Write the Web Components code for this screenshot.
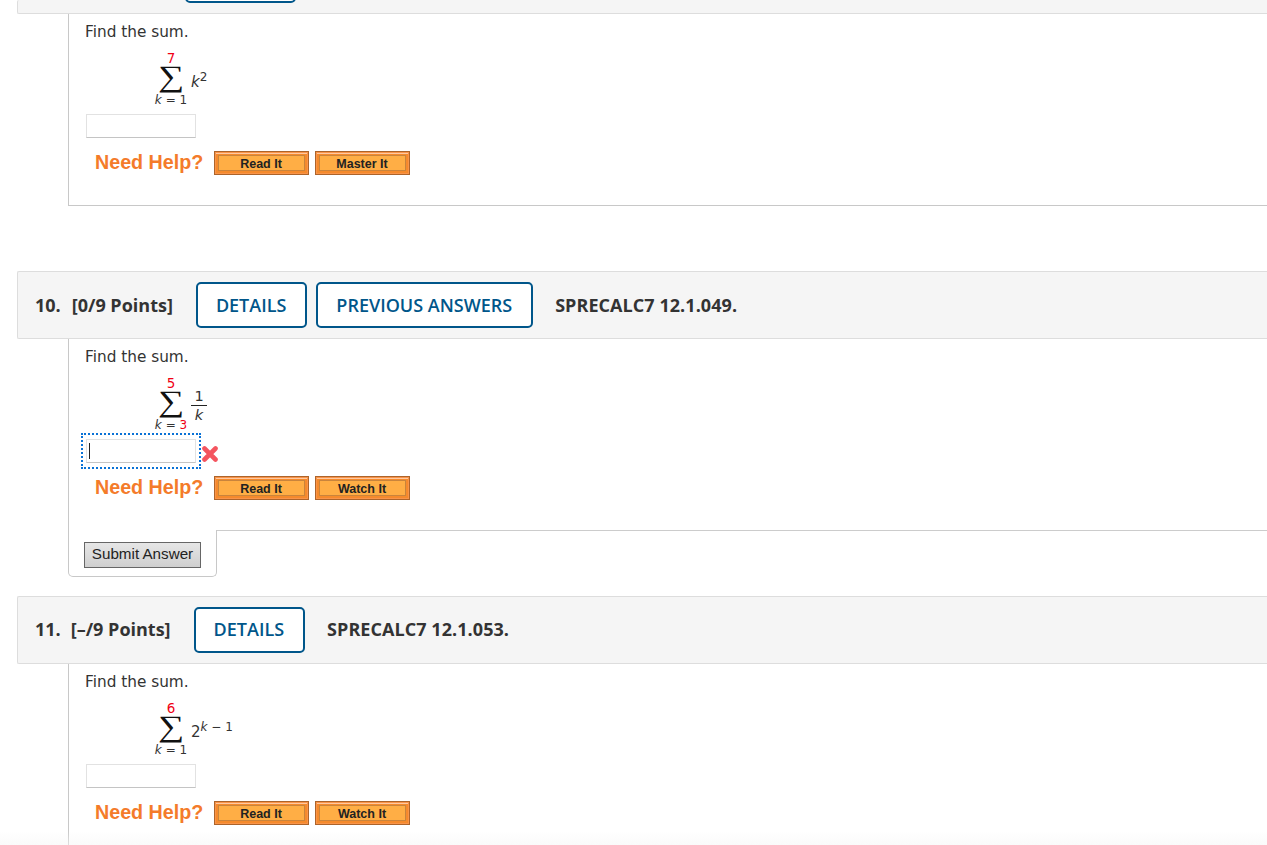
<!DOCTYPE html>
<html>
<head>
<meta charset="utf-8">
<title>Assignment</title>
<style>
  html, body { margin: 0; padding: 0; background: #fff; }
  body { height: 845px; overflow: hidden; position: relative; font-family: "DejaVu Sans", sans-serif; color: #333; }
  .fade { position: absolute; left: 0; right: 0; bottom: 0; height: 14px; background: linear-gradient(rgba(245,245,245,0), rgba(245,245,245,.5)); }
</style>
</head>
<body>

<q-header class="cut"></q-header>
<q-body>
  <sum-formula upper="7" lower="1"><i>k</i><sup>2</sup></sum-formula>
  <answer-box></answer-box>
  <need-help second="Master It"></need-help>
</q-body>

<q-header num="10." points="[0/9 Points]" code="SPRECALC7 12.1.049." style="margin-top:65px;--num-gap:11px">
  <details-button>DETAILS</details-button>
  <details-button>PREVIOUS ANSWERS</details-button>
</q-header>
<q-body submit>
  <sum-formula upper="5" lower="3" lower-red><frac-term>1</frac-term></sum-formula>
  <answer-box focused wrong></answer-box>
  <need-help second="Watch It"></need-help>
</q-body>

<q-header num="11." points="[–/9 Points]" code="SPRECALC7 12.1.053." style="margin-top:19px;--num-gap:10px;--row-pad:2px">
  <details-button>DETAILS</details-button>
</q-header>
<q-body>
  <sum-formula upper="6" lower="1">2<sup><i>k</i> − 1</sup></sum-formula>
  <answer-box></answer-box>
  <need-help second="Watch It"></need-help>
</q-body>

<div class="fade"></div>

<script>
class DetailsButton extends HTMLElement {
  constructor() {
    super();
    this.attachShadow({ mode: 'open' });
    this.shadowRoot.innerHTML = `
      <style>
        :host {
          display: inline-flex;
          align-items: center;
          box-sizing: border-box;
          height: 46px;
          padding: 0 19px var(--row-pad, 0) 18px;
          border: 2px solid #00568a;
          border-radius: 5px;
          background: #fff;
          color: #00568a;
          font: 600 18px "Open Sans", sans-serif;
          white-space: nowrap;
        }
      </style>
      <slot></slot>
    `;
  }
}
customElements.define('details-button', DetailsButton);

class QHeader extends HTMLElement {
  constructor() {
    super();
    this.attachShadow({ mode: 'open' });
  }

  connectedCallback() {
    const num = this.getAttribute('num') || '';
    const points = this.getAttribute('points') || '';
    const code = this.getAttribute('code') || '';
    this.shadowRoot.innerHTML = `
      <style>
        :host {
          display: block;
          box-sizing: border-box;
          height: 68px;
          margin-left: 17px;
          border: 1px solid #ddd;
          border-right: none;
          border-radius: 2px 0 0 2px;
          background: #f5f5f5;
          color: #333;
          font: 700 18px "Open Sans", sans-serif;
          overflow: hidden;
        }
        :host(.cut) { height: 14px; border-top: none; }
        .row { display: flex; align-items: center; height: 100%; padding-left: 17px; white-space: nowrap; }
        .num { margin-right: var(--num-gap, 11px); }
        .points { margin-right: 23px; }
        .btns { display: flex; gap: 9px; margin-right: 22px; }
        .label { padding-bottom: var(--row-pad, 0); }
        .code { letter-spacing: .06px; }
        .stub { box-sizing: border-box; width: 111px; height: 46px; margin: -43px 0 0 167px; border: 2px solid #00568a; border-radius: 5px; background: #fff; }
      </style>
      ${this.classList.contains('cut') ? '<div class="stub"></div>' : `
      <div class="row">
        <span class="num label">${num}</span>
        <span class="points label">${points}</span>
        <span class="btns"><slot></slot></span>
        <span class="code label">${code}</span>
      </div>`}
    `;
  }
}
customElements.define('q-header', QHeader);

class QBody extends HTMLElement {
  constructor() {
    super();
    this.attachShadow({ mode: 'open' });
  }

  connectedCallback() {
    const submit = this.hasAttribute('submit');
    this.shadowRoot.innerHTML = `
      <style>
        :host {
          display: block;
          margin-left: 68px;
          color: #333;
          font: 15.3px "DejaVu Sans", sans-serif;
        }
        .main {
          box-sizing: border-box;
          border-left: 1px solid #c8c8c8;
          padding: 9px 0 30px 16px;
        }
        :host(:not([submit])) .main { border-bottom: 1px solid #c8c8c8; }
        .find { height: 25px; line-height: 18px; }
        .foot { display: flex; height: 47px; }
        .tab {
          box-sizing: border-box;
          width: 149px;
          height: 47px;
          padding: 12px 0 0 15px;
          border: 1px solid #c8c8c8;
          border-top: none;
          border-radius: 0 0 5px 5px;
        }
        .rest { flex: 1; border-top: 1px solid #ccc; }
        .submit {
          box-sizing: border-box;
          width: 117px;
          height: 26px;
          padding: 0 0 3px;
          border: 1px solid #666;
          border-radius: 0;
          background: linear-gradient(#e6e6e6, #cfcfcf);
          color: #222;
          font: 15.2px "Liberation Sans", sans-serif;
        }
      </style>
      <div class="main" style="${submit ? 'padding-bottom:0;height:191px' : ''}">
        <div class="find">Find the sum.</div>
        <slot></slot>
      </div>
      ${submit ? `
      <div class="foot">
        <div class="tab"><button class="submit">Submit Answer</button></div>
        <div class="rest"></div>
      </div>` : ''}
    `;
  }
}
customElements.define('q-body', QBody);

class SumFormula extends HTMLElement {
  constructor() {
    super();
    this.attachShadow({ mode: 'open' });
  }

  connectedCallback() {
    const upper = this.getAttribute('upper');
    const lower = this.getAttribute('lower');
    const lowerColor = this.hasAttribute('lower-red') ? 'color:#f00014' : '';
    this.shadowRoot.innerHTML = `
      <style>
        :host {
          display: block;
          box-sizing: border-box;
          height: 66px;
          padding: 3px 0 0 69px;
          color: #333;
          font: 12px "DejaVu Sans", sans-serif;
        }
        .wrap { display: flex; align-items: center; }
        .sum { display: grid; justify-items: center; width: 34px; }
        .upper { color: #f00014; height: 13px; font-size: 13.5px; line-height: 14px; }
        .sigma { height: 27px; font: 400 34px/27px "Liberation Serif", serif; color: #111; transform: scale(1.08, .87); transform-origin: 50% 0; }
        .lower { height: 15px; font-size: 12px; line-height: 19px; white-space: nowrap; }
        .term { margin: 6px 0 0 3px; font-size: 15px; }
        i { font-style: italic; }
        ::slotted(sup) { font-size: 12px; line-height: 0; }
      </style>
      <div class="wrap">
        <div class="sum">
          <span class="upper">${upper}</span>
          <span class="sigma">∑</span>
          <span class="lower"><i>k</i> = <span style="${lowerColor}">${lower}</span></span>
        </div>
        <div class="term"><slot></slot></div>
      </div>
    `;
  }
}
customElements.define('sum-formula', SumFormula);

class FracTerm extends HTMLElement {
  constructor() {
    super();
    this.attachShadow({ mode: 'open' });
    this.shadowRoot.innerHTML = `
      <style>
        :host { display: inline-grid; justify-items: center; width: 16px; font-size: 14.5px; line-height: 15px; transform: translateY(-2px); }
        .top { width: 100%; text-align: center; border-bottom: 1px solid #222; padding-bottom: 1px; }
        i { padding-top: 2px; }
      </style>
      <span class="top"><slot></slot></span>
      <i>k</i>
    `;
  }
}
customElements.define('frac-term', FracTerm);

class AnswerBox extends HTMLElement {
  constructor() {
    super();
    this.attachShadow({ mode: 'open' });
  }

  connectedCallback() {
    const focused = this.hasAttribute('focused');
    const wrong = this.hasAttribute('wrong');
    this.shadowRoot.innerHTML = `
      <style>
        :host { display: flex; align-items: center; height: 24px; margin-left: 1px; }
        .field { position: relative; width: 110px; height: 24px; }
        input {
          display: block;
          box-sizing: border-box;
          width: 110px;
          height: 24px;
          margin: 0;
          padding: 0;
          border: 1px solid #e2e2e2;
          border-bottom-color: #c4c4c4;
          background: #fff;
          outline: none;
        }
        .ring { position: absolute; left: -5px; top: -6px; right: -5px; bottom: -6px; border: 2px dotted #0a72d6; }
        .caret { position: absolute; left: 3px; top: 4px; width: 1px; height: 16px; background: #222; }
        svg { display: block; margin: 6px 0 0 6px; }
      </style>
      <div class="field">
        <input type="text">
        ${focused ? '<span class="ring"></span><span class="caret"></span>' : ''}
      </div>
      ${wrong ? `<svg width="16" height="16" viewBox="0 0 16 16"><path d="M2.5 2.5L13.5 13.5M13.5 2.5L2.5 13.5" stroke="#f4555f" stroke-width="4.6" stroke-linecap="round"/></svg>` : ''}
    `;
  }
}
customElements.define('answer-box', AnswerBox);

class OrangeButton extends HTMLElement {
  constructor() {
    super();
    this.attachShadow({ mode: 'open' });
    this.shadowRoot.innerHTML = `
      <style>
        :host {
          display: flex;
          align-items: center;
          justify-content: center;
          box-sizing: border-box;
          width: 95px;
          height: 24px;
          padding: 1px 1px 0 0;
          border: 1px solid #ad642a;
          background: #ffae45;
          box-shadow: inset 0 0 0 1px #f9944a, inset 0 1px 0 1px #ffc9a0, inset 0 0 0 3px #f58a2c, inset 0 0 0 4px #c9843c;
          color: #222;
          font: 700 12.5px "Liberation Sans", sans-serif;
        }
      </style>
      <slot></slot>
    `;
  }
}
customElements.define('orange-button', OrangeButton);

class NeedHelp extends HTMLElement {
  constructor() {
    super();
    this.attachShadow({ mode: 'open' });
  }

  connectedCallback() {
    const second = this.getAttribute('second');
    this.shadowRoot.innerHTML = `
      <style>
        :host { display: flex; align-items: center; gap: 6px; height: 24px; margin: 13px 0 0 10px; }
        .label { width: 113px; padding-bottom: 2px; color: #f47b2a; font: 700 19.7px "Liberation Sans", sans-serif; white-space: nowrap; }
      </style>
      <span class="label">Need Help?</span>
      <orange-button>Read It</orange-button>
      <orange-button>${second}</orange-button>
    `;
  }
}
customElements.define('need-help', NeedHelp);
</script>
</body>
</html>
